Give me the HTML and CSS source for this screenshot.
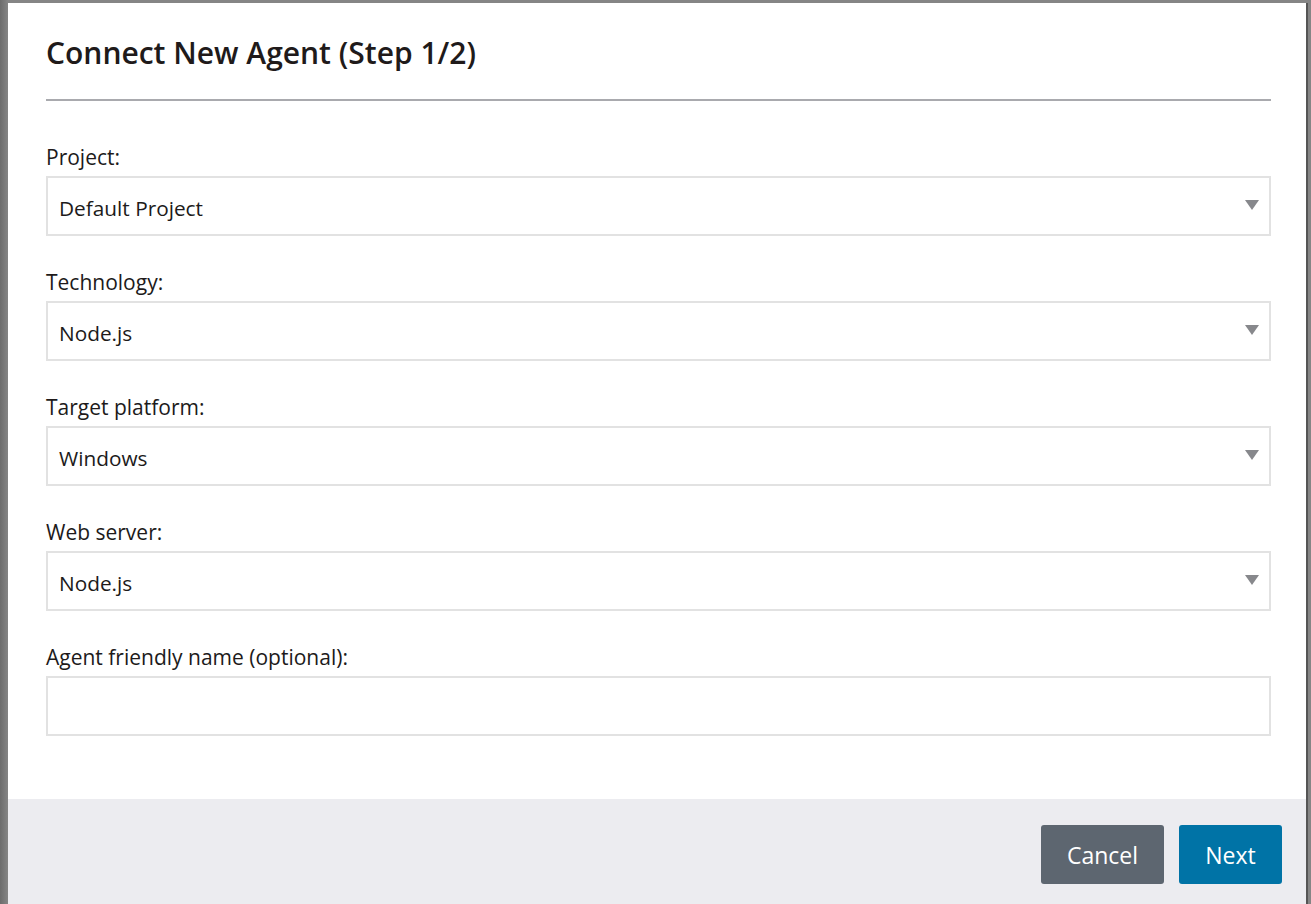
FILE: index.html
```html
<!DOCTYPE html>
<html>
<head>
<meta charset="utf-8">
<link rel="stylesheet" href="styles.css">
</head>
<body>
<div class="dialog">
  <div class="body">
    <h1 class="title">Connect New Agent (Step 1/2)</h1>
    <div class="rule"></div>
    <div class="fields">
      <div class="field">
        <div class="label">Project:</div>
        <div class="select"><span>Default Project</span><i class="caret"></i></div>
      </div>
      <div class="field">
        <div class="label">Technology:</div>
        <div class="select"><span>Node.js</span><i class="caret"></i></div>
      </div>
      <div class="field">
        <div class="label">Target platform:</div>
        <div class="select"><span>Windows</span><i class="caret"></i></div>
      </div>
      <div class="field">
        <div class="label">Web server:</div>
        <div class="select"><span>Node.js</span><i class="caret"></i></div>
      </div>
      <div class="field">
        <div class="label">Agent friendly name (optional):</div>
        <div class="input"></div>
      </div>
    </div>
  </div>
  <div class="footer">
    <button class="btn btn-cancel">Cancel</button>
    <button class="btn btn-next">Next</button>
  </div>
</div>
</body>
</html>
```
FILE: styles.css
```css
html, body {
  margin: 0;
  padding: 0;
  height: 100%;
  overflow: hidden;
}
body {
  background: linear-gradient(to right, #6c6c6c 0px, #858585 8px, #858585 100%);
  font-family: "Open Sans", "Noto Sans", sans-serif;
  color: #201a1a;
}
.dialog {
  margin: 3px 0 0 8px;
  width: 1298px;
  height: 901px;
  background: #fff;
  border-right: 2px solid #555;
  display: flex;
  flex-direction: column;
}
.body {
  flex: 1;
  padding: 0 35px 0 38px;
}
.title {
  margin: 0;
  padding-top: 30px;
  height: 50px;
  font-size: 30px;
  font-weight: 600;
  line-height: 40px;
}
.rule {
  margin-top: 16px;
  height: 2px;
  background: #a9aaae;
}
.fields {
  padding-top: 42px;
  display: flex;
  flex-direction: column;
  gap: 32px;
}
.field {
  display: flex;
  flex-direction: column;
}
.label {
  font-size: 21px;
  line-height: 24px;
  height: 33px;
  padding-top: 2px;
  box-sizing: border-box;
}
.select, .input {
  height: 60px;
  box-sizing: border-box;
  border: 2px solid #e2e2e2;
  display: flex;
  align-items: center;
  padding: 3px 10px 0 11px;
  font-size: 20.8px;
  justify-content: space-between;
}
.caret {
  width: 0;
  height: 0;
  border-left: 7px solid transparent;
  border-right: 7px solid transparent;
  border-top: 10px solid #87888c;
  margin-top: -6px;
}
.footer {
  height: 105px;
  background: #ececf0;
  display: flex;
  justify-content: flex-end;
  align-items: flex-start;
  padding: 26px 24px 0 0;
  box-sizing: border-box;
  gap: 15px;
}
.btn {
  height: 59px;
  border: none;
  border-radius: 3px;
  color: #fff;
  font-family: "Open Sans", "Noto Sans", sans-serif;
  font-size: 23px;
  cursor: pointer;
}
.btn-cancel {
  width: 123px;
  background: #5d6670;
}
.btn-next {
  width: 103px;
  background: #0073a6;
}
```
